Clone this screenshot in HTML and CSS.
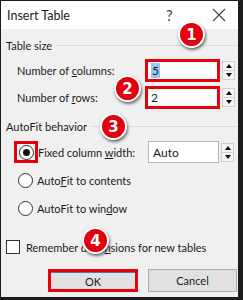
FILE: index.html
```html
<!DOCTYPE html>
<html lang="en">
<head>
  <meta charset="UTF-8">
  <title>Insert Table</title>
  <link rel="stylesheet" href="styles.css">
</head>
<body>
  <div class="dialog">
    <div class="titlebar">
      <span class="title">Insert Table</span>
      <span class="help">?</span>
      <span class="close">
        <svg width="14" height="14" viewBox="0 0 14 14"><path d="M1 1 L13 13 M13 1 L1 13" stroke="#444" stroke-width="1.1" fill="none"/></svg>
      </span>
    </div>

    <div class="group">
      <span class="group-label">Table size</span>
      <span class="rule"></span>
    </div>

    <div class="field first">
      <span class="field-label">Number of <u>c</u>olumns:</span>
      <div class="input marked"><span class="sel">5</span></div>
      <div class="spin"><span class="up"></span><span class="down"></span></div>
    </div>
    <div class="field">
      <span class="field-label">Number of <u>r</u>ows:</span>
      <div class="input marked">2</div>
      <div class="spin"><span class="up"></span><span class="down"></span></div>
    </div>

    <div class="group second">
      <span class="group-label">AutoFit behavior</span>
      <span class="rule"></span>
    </div>

    <div class="option first-option">
      <span class="radio-box"><span class="radio checked"></span></span>
      <span class="option-label">Fixed column <u>w</u>idth:</span>
      <div class="input auto">Auto</div>
      <div class="spin"><span class="up"></span><span class="down"></span></div>
    </div>
    <div class="option">
      <span class="radio plain"></span>
      <span class="option-label">Auto<u>F</u>it to contents</span>
    </div>
    <div class="option">
      <span class="radio plain"></span>
      <span class="option-label">AutoFit to win<u>d</u>ow</span>
    </div>

    <div class="check-row">
      <span class="checkbox"></span>
      <span>Remember dime<u>n</u>sions for new tables</span>
    </div>

    <div class="buttons">
      <div class="ok-mark"><span class="ok">OK</span></div>
      <div class="cancel">Cancel</div>
    </div>

    <span class="badge b1">1</span>
    <span class="badge b2">2</span>
    <span class="badge b3">3</span>
    <span class="badge b4">4</span>
  </div>
</body>
</html>
```

FILE: styles.css
```css
body {
  margin: 0;
  background-color: #1c1c1c;
  font-family: 'Lato', 'Open Sans', sans-serif;
  font-size: 11px;
  color: #1a1a1a;
}
.dialog {
  position: relative;
  margin: 1px 5px 3px 1px;
  width: 237px;
  height: 296px;
  background-color: #f0f0f0;
}
.titlebar {
  height: 28px;
  background-color: #fff;
  display: flex;
  align-items: center;
  padding-left: 6px;
}
.title {
  font-size: 12.5px;
  flex: 1;
}
.help {
  width: 14px;
  font-size: 15px;
  color: #444;
  margin-right: 32px;
}
.close {
  width: 14px;
  height: 14px;
  margin-right: 12px;
}
.group {
  display: flex;
  align-items: center;
  height: 20px;
  margin-top: 6px;
  padding-left: 5px;
}
.group.second {
  margin-top: 7px;
}
.rule {
  flex: 1;
  height: 1px;
  background-color: #dcdcdc;
  margin-left: 4px;
}
.field {
  display: flex;
  align-items: center;
  height: 23px;
  margin-top: 4px;
  padding-left: 16px;
}
.field-label {
  width: 128px;
}
.input {
  box-sizing: border-box;
  height: 23px;
  background-color: #fff;
  display: flex;
  align-items: center;
  padding-left: 3px;
  font-size: 12px;
}
.input.marked {
  width: 75px;
  border: 3px solid #e8000c;
}
.sel {
  background-color: #99c9ef;
  padding: 0 1px;
}
.spin {
  box-sizing: border-box;
  width: 13px;
  height: 19px;
  margin-left: 2px;
  border: 1px solid #d0d0d0;
  background-color: #f4f4f4;
  display: flex;
  flex-direction: column;
}
.spin span {
  flex: 1;
  display: flex;
  align-items: center;
  justify-content: center;
}
.spin .up {
  border-bottom: 1px solid #d0d0d0;
}
.spin .up::before {
  content: '';
  border-left: 3px solid transparent;
  border-right: 3px solid transparent;
  border-bottom: 4px solid #111;
}
.spin .down::before {
  content: '';
  border-left: 3px solid transparent;
  border-right: 3px solid transparent;
  border-top: 4px solid #111;
}
.option {
  display: flex;
  align-items: center;
  height: 22px;
  margin-top: 6px;
  padding-left: 17px;
}
.option.first-option {
  margin-top: 5px;
  padding-left: 13px;
}
.radio-box {
  box-sizing: border-box;
  width: 24px;
  height: 22px;
  border: 3px solid #e8000c;
  display: flex;
  align-items: center;
  justify-content: center;
}
.radio {
  box-sizing: border-box;
  width: 15px;
  height: 15px;
  border: 1px solid #333;
  border-radius: 50%;
  background-color: #fff;
  display: flex;
  align-items: center;
  justify-content: center;
}
.radio.plain {
  margin-right: 4px;
}
.radio.checked::before {
  content: '';
  width: 7px;
  height: 7px;
  border-radius: 50%;
  background-color: #111;
}
.option-label {
  width: 110px;
}
.input.auto {
  width: 71px;
  height: 22px;
  border: 1px solid #b4b4b4;
  padding-left: 4px;
}
.check-row {
  display: flex;
  align-items: center;
  height: 20px;
  margin-top: 18px;
  padding-left: 5px;
}
.checkbox {
  box-sizing: border-box;
  width: 14px;
  height: 14px;
  border: 1px solid #333;
  background-color: #fff;
  margin-right: 6px;
}
.buttons {
  display: grid;
  grid-template-columns: 90px 89px;
  column-gap: 10px;
  margin-top: 12px;
  padding-left: 47px;
}
.ok-mark {
  box-sizing: border-box;
  height: 23px;
  border: 3px solid #e8000c;
  display: flex;
}
.ok {
  flex: 1;
  display: flex;
  align-items: center;
  justify-content: center;
  background-color: #e1e1e1;
  border-top: 1px solid #3c7fb1;
}
.cancel {
  box-sizing: border-box;
  height: 23px;
  display: flex;
  align-items: center;
  justify-content: center;
  background-color: #e1e1e1;
  border: 1px solid #adadad;
}
.badge {
  position: absolute;
  box-sizing: border-box;
  width: 27px;
  height: 27px;
  border-radius: 50%;
  background-color: #e3000f;
  border: 2px solid #fff;
  box-shadow: 1px 2px 3px rgba(0, 0, 0, 0.55);
  color: #fff;
  font-family: 'DejaVu Sans', sans-serif;
  font-weight: bold;
  font-size: 15px;
  display: flex;
  align-items: center;
  justify-content: center;
}
.b1 { left: 177px; top: 20px; }
.b2 { left: 113px; top: 74px; }
.b3 { left: 99px; top: 112px; }
.b4 { left: 81px; top: 226px; }
```
